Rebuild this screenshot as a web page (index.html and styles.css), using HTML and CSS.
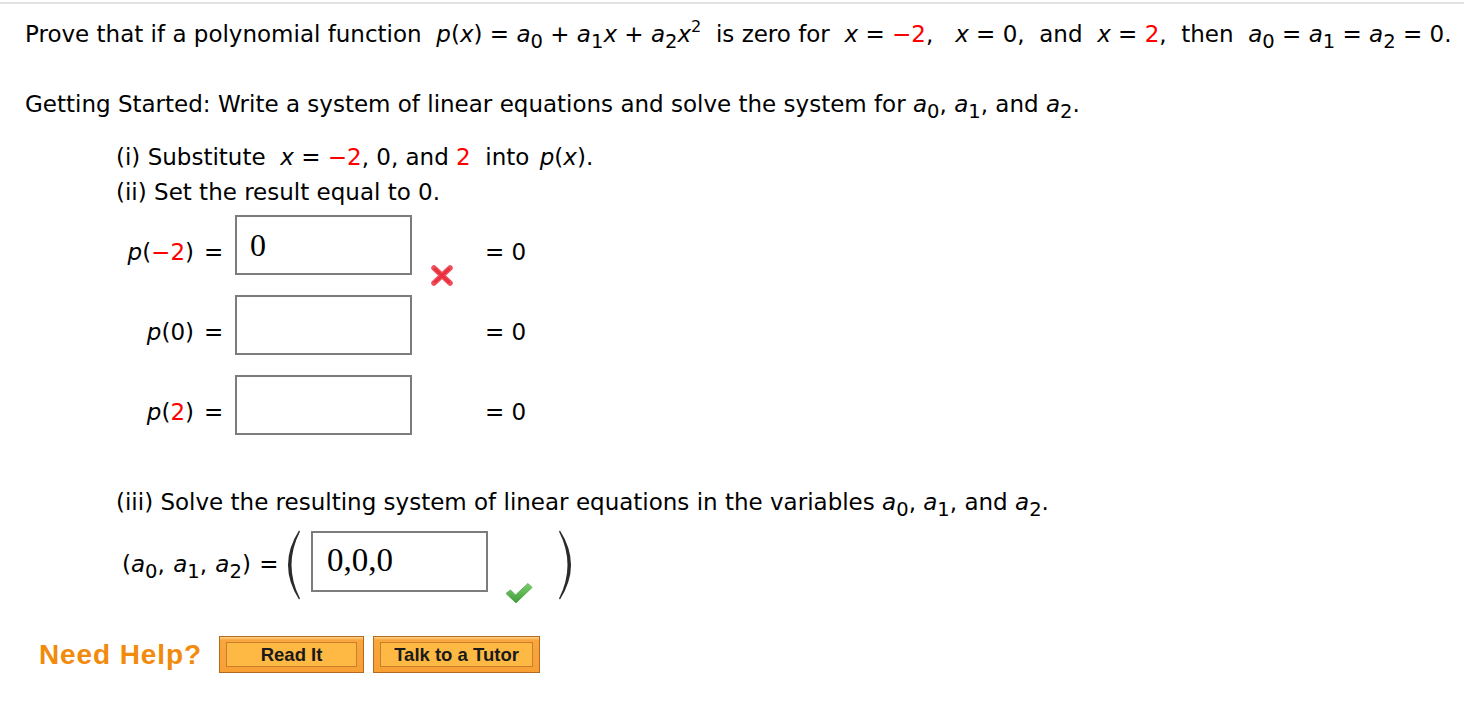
FILE: index.html
```html
<!DOCTYPE html>
<html>
<head>
<meta charset="utf-8">
<link rel="stylesheet" href="styles.css">
</head>
<body>
<div class="topline"></div>
<div class="question">
  <p class="prompt">Prove that if a polynomial function&nbsp; <i>p</i>(<i>x</i>) = <i>a</i><sub>0</sub> + <i>a</i><sub>1</sub><i>x</i> + <i>a</i><sub>2</sub><i>x</i><sup>2</sup>&nbsp; is zero for&nbsp; <i>x</i> = <span class="red">&minus;2</span>,&nbsp;&nbsp; <i>x</i> = 0,&nbsp; and&nbsp; <i>x</i> = <span class="red">2</span>,&nbsp; then&nbsp; <i>a</i><sub>0</sub> = <i>a</i><sub>1</sub> = <i>a</i><sub>2</sub> = 0.</p>
  <p class="started">Getting Started: Write a system of linear equations and solve the system for <i>a</i><sub>0</sub>, <i>a</i><sub>1</sub>, and <i>a</i><sub>2</sub>.</p>
  <div class="steps">
    <p class="step">(i) Substitute&nbsp; <i>x</i> = <span class="red">&minus;2</span>, 0, and <span class="red">2</span>&nbsp; into <i class="px">p</i>(<i>x</i>).</p>
    <p class="step">(ii) Set the result equal to 0.</p>
    <div class="eqs">
      <div class="eq">
        <span class="lbl"><i>p</i>(<span class="red">&minus;2</span>)</span>
        <span class="eqsign">=</span>
        <div class="box">0</div>
        <span class="fb">
          <svg class="xmark" width="24" height="23" viewBox="0 0 24 23"><g stroke="#ef4f5b" stroke-width="5.5" stroke-linecap="round"><line x1="4" y1="4" x2="20" y2="19"/><line x1="20" y1="4" x2="4" y2="19"/></g><g stroke="#e8303e" stroke-width="2.5" stroke-linecap="round"><line x1="5" y1="5" x2="19" y2="18"/><line x1="19" y1="5" x2="5" y2="18"/></g></svg>
        </span>
        <span class="rhs">= 0</span>
      </div>
      <div class="eq">
        <span class="lbl"><i>p</i>(0)</span>
        <span class="eqsign">=</span>
        <div class="box"></div>
        <span class="fb"></span>
        <span class="rhs">= 0</span>
      </div>
      <div class="eq">
        <span class="lbl"><i>p</i>(<span class="red">2</span>)</span>
        <span class="eqsign">=</span>
        <div class="box"></div>
        <span class="fb"></span>
        <span class="rhs">= 0</span>
      </div>
    </div>
    <p class="step step3">(iii) Solve the resulting system of linear equations in the variables <i>a</i><sub>0</sub>, <i>a</i><sub>1</sub>, and <i>a</i><sub>2</sub>.</p>
    <div class="answer">
      <span class="alabel">(<i>a</i><sub>0</sub>, <i>a</i><sub>1</sub>, <i>a</i><sub>2</sub>) =</span>
      <svg class="paren" width="20" height="72" viewBox="0 0 20 72"><path d="M18 1.5 Q-4 36 18 70.5 L19 69.5 Q2 36 19 2.5 Z" fill="#2a2a2a"/></svg>
      <div class="box abox">0,0,0</div>
      <svg class="check" width="28" height="22" viewBox="0 0 28 22"><defs><linearGradient id="g" x1="0" y1="0" x2="0" y2="1"><stop offset="0" stop-color="#7fcf6e"/><stop offset="1" stop-color="#3f9b3a"/></linearGradient></defs><path d="M1 11.5 L5.5 8 L10.5 13 L23 1.5 L27 5.5 L11 21 Z" fill="url(#g)" stroke="#4aa545" stroke-width="0.8" stroke-linejoin="round"/></svg>
      <svg class="paren rparen" width="20" height="72" viewBox="0 0 20 72"><path d="M2 1.5 Q24 36 2 70.5 L1 69.5 Q18 36 1 2.5 Z" fill="#2a2a2a"/></svg>
    </div>
  </div>
  <div class="help">
    <span class="needhelp">Need Help?</span>
    <span class="btn"><span class="btn-in read">Read It</span></span>
    <span class="btn"><span class="btn-in tutor">Talk to a Tutor</span></span>
  </div>
</div>
</body>
</html>
```

FILE: styles.css
```css
html, body {
  margin: 0;
  padding: 0;
  background: #ffffff;
}
body {
  font-family: "DejaVu Sans", Verdana, sans-serif;
  font-size: 23px;
  color: #000;
}
.topline {
  margin-top: 2px;
  height: 2px;
  background: #e2e2e2;
}
.question {
  padding-left: 25px;
}
p {
  margin: 0;
}
i {
  font-style: italic;
}
.px {
  margin-left: 3px;
}
sub {
  font-size: 85%;
  vertical-align: -0.3em;
  line-height: 0;
}
sup {
  font-size: 70%;
  vertical-align: 0.6em;
  line-height: 0;
}
.red {
  color: #ff0000;
}
.prompt {
  margin-top: 15px;
  line-height: 30px;
}
.started {
  margin-top: 40px;
  line-height: 30px;
}
.steps {
  padding-left: 91px;
  margin-top: 21px;
}
.step {
  line-height: 35px;
}
.eqs {
  margin-top: 5px;
  display: flex;
  flex-direction: column;
  gap: 20px;
}
.eq {
  display: flex;
  align-items: center;
  height: 60px;
}
.lbl {
  width: 78px;
  text-align: right;
  padding-top: 13px;
}
.eqsign {
  width: 41px;
  padding-left: 10px;
  box-sizing: border-box;
  padding-top: 13px;
}
.box {
  width: 177px;
  height: 60px;
  box-sizing: border-box;
  border: 2px solid #7c7c7c;
  font-family: "Liberation Serif", "Times New Roman", serif;
  font-size: 32px;
  line-height: 56px;
  padding-left: 13px;
}
.fb {
  width: 73px;
  height: 60px;
  position: relative;
}
.xmark {
  position: absolute;
  left: 18px;
  top: 49px;
}
.rhs {
  padding-top: 13px;
}
.step3 {
  margin-top: 50px;
}
.answer {
  margin-top: 10px;
  display: flex;
  align-items: flex-start;
  height: 72px;
}
.alabel {
  margin-left: 6px;
  padding-top: 21px;
  width: 159px;
  flex-shrink: 0;
  word-spacing: 1px;
}
.paren {
  margin-top: -1px;
  flex-shrink: 0;
}
.abox {
  margin-left: 10px;
  margin-top: 1px;
  padding-left: 14px;
  line-height: 54px;
  height: 61px;
  font-size: 33px;
}
.check {
  margin-left: 17px;
  margin-top: 52px;
}
.rparen {
  margin-left: 25px;
}
.help {
  margin-top: 34px;
  display: flex;
  align-items: center;
  padding-left: 14px;
}
.needhelp {
  font-family: "Liberation Sans", Arial, sans-serif;
  font-weight: bold;
  font-size: 28px;
  letter-spacing: 0.9px;
  color: #f28a0c;
  margin-right: 17px;
}
.btn {
  display: inline-block;
  border: 1px solid #b06a24;
  background: linear-gradient(#fcd28c 0, #f9a63c 3px, #f8a034 100%);
  padding: 5px 6px;
  box-sizing: border-box;
  height: 37px;
  margin-right: 9px;
}
.btn-in {
  display: block;
  border: 1px solid #c7802f;
  background: #fdb944;
  font-family: "Liberation Sans", Arial, sans-serif;
  font-weight: bold;
  font-size: 18.5px;
  line-height: 23px;
  color: #1a1a1a;
  text-align: center;
}
.read {
  width: 131px;
  box-sizing: border-box;
}
.tutor {
  width: 153px;
  box-sizing: border-box;
}
```
